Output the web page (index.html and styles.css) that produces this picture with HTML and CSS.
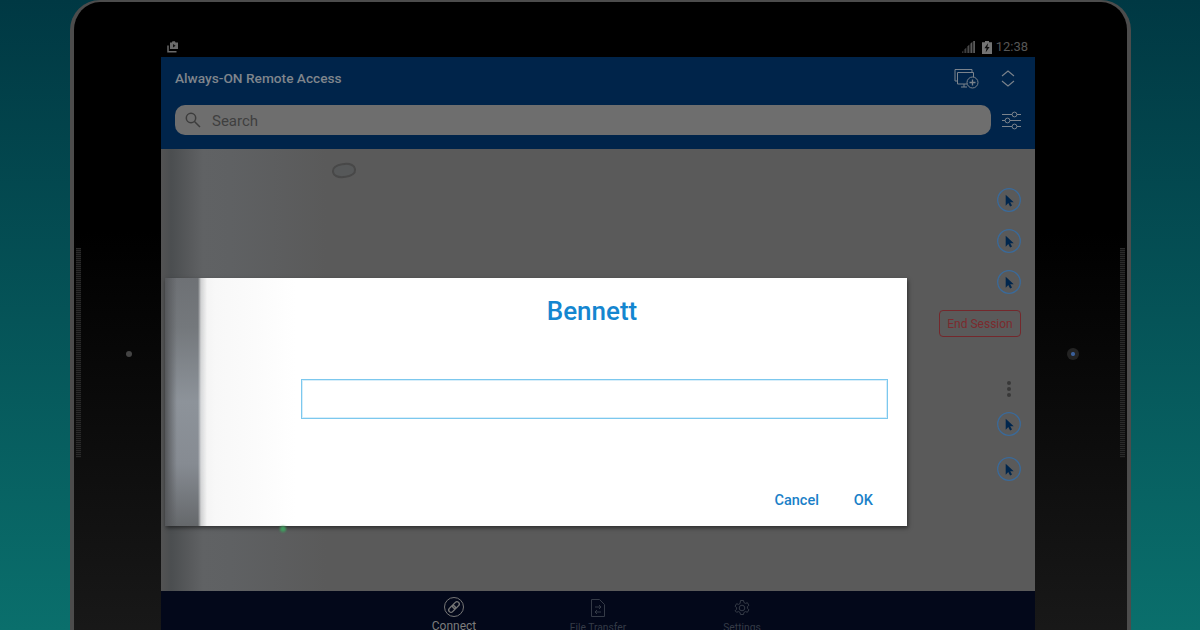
FILE: index.html
```html
<!DOCTYPE html>
<html lang="en">
<head>
  <meta charset="UTF-8" />
  <title>Always-ON Remote Access</title>
  <link rel="stylesheet" href="styles.css">
</head>
<body>
  <div class="tablet">
    <div class="grille grille-left"></div>
    <div class="grille grille-right"></div>
    <div class="sensor"></div>
    <div class="camera"></div>

    <div class="screen">
      <div class="status-bar">
        <svg class="status-app" width="12" height="12" viewBox="0 0 12 12">
          <path d="M3 1.500h1.800l.7-1.200h2.400l.7 1.200H11v6.500H3z" fill="#6a6a6a"/>
          <path d="M6 3l2.600 1.700L6 6.400z" fill="#111"/>
          <path d="M1 4.500v6.300h8.500" fill="none" stroke="#6a6a6a" stroke-width="1.500"/>
        </svg>
        <div class="status-right">
          <svg width="13" height="12" viewBox="0 0 13 12">
            <path d="M0 12V10.700L1.400 9.400V12z" fill="#333"/>
            <path d="M2.400 12V8.400L4.400 6.500V12z" fill="#3e3e3e"/>
            <path d="M5.400 12V5.500L7.400 3.600V12z" fill="#4a4a4a"/>
            <path d="M8.400 12V2.700L10.400 .8V12z" fill="#5a5a5a"/>
            <path d="M11.200 12V0H13V12z" fill="#5a5a5a"/>
          </svg>
          <svg class="battery" width="10" height="13" viewBox="0 0 10 13">
            <path d="M3 0h4v1.200h3V13H0V1.200h3z" fill="#747474"/>
            <path d="M6.200 2L2.400 7.200h2.200L3.600 11.600l4-5.600H5.300z" fill="#0c0c0c"/>
          </svg>
          <span class="clock">12:38</span>
        </div>
      </div>

      <div class="app">
        <header class="app-header">
          <div class="title-row">
            <span class="app-title">Always-ON Remote Access</span>
            <svg class="add-screen" width="25" height="20" viewBox="0 0 25 20" fill="none" stroke="#7b838c" stroke-width="1">
              <path d="M3 12H1V.5h17V3"/>
              <path d="M3.500 3.500H19.500v4.500M13 15H3.500V3.500"/>
              <path d="M7 18h6M10 15v3"/>
              <circle cx="18.500" cy="13.500" r="5.500"/>
              <path d="M18.500 10.500v6M15.500 13.500h6" stroke-width="1.300"/>
            </svg>
            <svg class="sort" width="14" height="17" viewBox="0 0 14 17" fill="none" stroke="#7b838c" stroke-width="1.100">
              <path d="M1 6l6-5 6 5M1 11l6 5 6-5"/>
            </svg>
          </div>
          <div class="search-row">
            <div class="search-box">
              <svg width="16" height="16" viewBox="0 0 16 16" fill="none" stroke="#3c3c3c" stroke-width="1.500">
                <circle cx="6" cy="6" r="4.700"/>
                <path d="M9.500 9.500l5.500 5.500"/>
              </svg>
              <span class="search-label">Search</span>
            </div>
            <svg class="filters" width="19" height="19" viewBox="0 0 19 19" fill="none" stroke="#7b838c" stroke-width="1">
              <path d="M0 3.500h10M15 3.500h4M0 9.500h3M8 9.500h11M0 15.500h10M15 15.500h4"/>
              <circle cx="12.500" cy="3.500" r="2.400"/>
              <circle cx="5.500" cy="9.500" r="2.400"/>
              <circle cx="12.500" cy="15.500" r="2.400"/>
            </svg>
          </div>
        </header>

        <main class="session-list">
          <div class="blur-band"></div>
          <div class="smudge"></div>
          <div class="row"><svg class="cursor" width="24" height="24" viewBox="0 0 24 24"><circle cx="12" cy="12" r="11.300"/><path d="M8.700 6.700v11l2.600-2.600 1.800 3.400 1.900-1-1.800-3.300h3.500z"/></svg></div>
          <div class="row"><svg class="cursor" width="24" height="24" viewBox="0 0 24 24"><circle cx="12" cy="12" r="11.300"/><path d="M8.700 6.700v11l2.600-2.600 1.800 3.400 1.900-1-1.800-3.300h3.500z"/></svg></div>
          <div class="row"><svg class="cursor" width="24" height="24" viewBox="0 0 24 24"><circle cx="12" cy="12" r="11.300"/><path d="M8.700 6.700v11l2.600-2.600 1.800 3.400 1.900-1-1.800-3.300h3.500z"/></svg></div>
          <div class="row"><button class="end-session">End Session</button></div>
          <div class="row row-menu"><div class="dots"><i></i><i></i><i></i></div></div>
          <div class="row row-short"><svg class="cursor" width="24" height="24" viewBox="0 0 24 24"><circle cx="12" cy="12" r="11.300"/><path d="M8.700 6.700v11l2.600-2.600 1.800 3.400 1.900-1-1.800-3.300h3.500z"/></svg></div>
          <div class="row row-last"><svg class="cursor" width="24" height="24" viewBox="0 0 24 24"><circle cx="12" cy="12" r="11.300"/><path d="M8.700 6.700v11l2.600-2.600 1.800 3.400 1.900-1-1.800-3.300h3.500z"/></svg></div>
        </main>

        <nav class="bottom-nav">
          <div class="tab tab-active">
            <svg width="20" height="20" viewBox="0 0 20 20" fill="none" stroke="#777" stroke-width="1">
              <circle cx="10" cy="10" r="9.500"/>
              <g transform="rotate(-45 10 10)" stroke-width="1.300">
                <rect x="3.500" y="7.700" width="7.500" height="4.600" rx="2.300"/>
                <rect x="9" y="7.700" width="7.500" height="4.600" rx="2.300"/>
              </g>
            </svg>
            <span>Connect</span>
          </div>
          <div class="tab">
            <svg width="14" height="18" viewBox="0 0 14 18" fill="none" stroke="#353b47" stroke-width="1">
              <path d="M.5.500h8l5 5v12H.5z"/>
              <path d="M4 8h6M8 6l2 2-2 2M10 13H4M6 11l-2 2 2 2"/>
            </svg>
            <span>File Transfer</span>
          </div>
          <div class="tab">
            <svg class="gear" width="16" height="16" viewBox="0 0 16 16" fill="none" stroke="#353b47" stroke-width="1">
              <path d="M6.500.500h3l.4 2 1.600.9 1.900-.7 1.500 2.600-1.500 1.300v1.800l1.500 1.300-1.500 2.600-1.900-.7-1.600.9-.4 2h-3l-.4-2-1.600-.9-1.900.7L1.100 10.700l1.500-1.300V7.600L1.100 6.300l1.500-2.600 1.900.7 1.600-.9z"/>
              <circle cx="8" cy="8" r="2.800"/>
            </svg>
            <span>Settings</span>
          </div>
        </nav>
      </div>

      <div class="dialog">
        <h1 class="dialog-title">Bennett</h1>
        <input class="dialog-input" type="text">
        <div class="dialog-actions">
          <span>Cancel</span>
          <span>OK</span>
        </div>
        <div class="speck"></div>
      </div>
    </div>
  </div>
</body>
</html>
```

FILE: styles.css
```css
html, body {
  margin: 0;
  height: 630px;
  overflow: hidden;
}

body {
  font-family: 'Roboto', 'Liberation Sans', sans-serif;
  background: linear-gradient(180deg, #003843 0%, #0a6f6c 100%);
  padding-left: 70px;
}

.tablet {
  position: relative;
  width: 1061px;
  height: 660px;
  box-sizing: border-box;
  padding-left: 87px;
  background: linear-gradient(180deg, #000 0%, #000 35%, #1a1a1a 100%);
  border: 4px solid #4c4c4c;
  border-top-width: 2px;
  border-bottom: none;
  border-radius: 30px 30px 0 0;
}

.grille {
  position: absolute;
  top: 246px;
  width: 5px;
  height: 210px;
  background: repeating-linear-gradient(180deg, #2a2a2a 0, #2a2a2a 1px, #121212 1px, #121212 2px);
}
.grille-left { left: 2px; }
.grille-right { right: 2px; }

.sensor {
  position: absolute;
  left: 52px;
  top: 349px;
  width: 6px;
  height: 6px;
  border-radius: 50%;
  background: #444;
}

.camera {
  position: absolute;
  left: 993px;
  top: 346px;
  width: 12px;
  height: 12px;
  border-radius: 50%;
  background: radial-gradient(circle, #3a5f9a 0, #3a5f9a 1.5px, #232323 2.5px);
}

.screen {
  position: relative;
  width: 874px;
}

.status-bar {
  height: 55px;
  box-sizing: border-box;
  padding: 39px 7px 0 6px;
  display: flex;
  justify-content: space-between;
  align-items: flex-start;
}

.status-right {
  display: flex;
  align-items: center;
  gap: 7px;
  color: #565656;
  margin-top: -1px;
}

.battery { margin-right: -3px; }

.clock { font-size: 13px; line-height: 14px; }

.app {
  display: flex;
  flex-direction: column;
  height: 573px;
}

.app-header {
  height: 92px;
  box-sizing: border-box;
  background: #00244a;
  padding: 0 14px;
}

.title-row {
  height: 42px;
  margin-bottom: 6px;
  display: flex;
  align-items: center;
}

.app-title {
  flex: 1;
  font-size: 13.700px;
  font-weight: 500;
  color: #7f858c;
}

.add-screen { margin-right: 22px; margin-top: 1px; }
.sort { margin-right: 6px; }

.search-row {
  display: flex;
  align-items: center;
  gap: 11px;
}

.search-box {
  flex: 1;
  height: 30px;
  box-sizing: border-box;
  border-radius: 10px;
  background: #6e6e6e;
  display: flex;
  align-items: center;
  gap: 11px;
  padding-left: 10px;
  font-size: 15px;
  color: #3f3f3f;
}

.search-label { margin-top: 2px; }

.session-list {
  position: relative;
  flex: 1;
  overflow: hidden;
  box-sizing: border-box;
  padding: 31px 14px 0 0;
  background: #5a5a5a;
}

.smudge {
  position: absolute;
  left: 171px;
  top: 14px;
  width: 24px;
  height: 15px;
  box-sizing: border-box;
  border: 2px solid #484848;
  border-radius: 45%;
  background: #565859;
  transform: rotate(-6deg);
}

.blur-band {
  position: absolute;
  left: 0;
  top: 0;
  width: 165px;
  height: 100%;
  background: linear-gradient(90deg, #535353 0, #4b4e50 10px, #57595b 28px, #606264 42px, #5f6163 70px, #5a5a5a 100%);
}

.row {
  position: relative;
  height: 41px;
  display: flex;
  align-items: center;
  justify-content: flex-end;
}

.row-menu {
  margin-top: 24px;
  height: 42px;
}

.row-short { height: 29px; }
.row-last { height: 61px; }

.cursor {
  margin-bottom: 1px;
}
.cursor circle {
  fill: none;
  stroke: #3a6a9a;
  stroke-width: 1.300;
}
.cursor path {
  fill: #00264d;
}

.end-session {
  width: 82px;
  height: 27px;
  padding: 0;
  font: 400 12px 'Roboto', sans-serif;
  color: #7c2a2e;
  background: transparent;
  border: 1px solid #74282c;
  border-radius: 4px;
}

.dots {
  display: flex;
  flex-direction: column;
  gap: 2px;
  margin-right: 10px;
}
.dots i {
  width: 4px;
  height: 4px;
  border-radius: 50%;
  background: #383838;
}

.bottom-nav {
  height: 39px;
  flex: none;
  overflow: hidden;
  background: #03081a;
  padding: 0 229px;
  display: flex;
  justify-content: space-between;
}

.tab {
  width: 128px;
  box-sizing: border-box;
  display: flex;
  flex-direction: column;
  align-items: center;
  gap: 4px;
  padding-top: 8px;
  font-size: 10.300px;
  color: #353b47;
  line-height: 13px;
  white-space: nowrap;
}

.tab svg, .tab span { flex: none; }

.gear { margin: 1px 0; }

.tab-active {
  padding-top: 6px;
  gap: 3px;
  font-size: 12px;
  color: #7c7c7c;
}

.dialog {
  position: absolute;
  left: 4px;
  top: 276px;
  width: 742px;
  height: 248px;
  box-sizing: border-box;
  padding: 0 19px 0 136px;
  background: linear-gradient(90deg, #eeeeee 0, #f2f2f2 36px, #f8f8f8 50px, #fbfbfb 90px, #fff 130px);
  box-shadow: 1px 2px 4px rgba(0, 0, 0, 0.5);
  display: flex;
  flex-direction: column;
}

/* washed out strip on the left of the capture */
.dialog::before {
  content: "";
  position: absolute;
  left: 0;
  top: 0;
  width: 42px;
  height: 100%;
  background:
    linear-gradient(90deg, #55575a 0, rgba(85, 87, 90, 0) 12px),
    linear-gradient(180deg, #6e7175 0, #74787c 20%, #8d939a 50%, #868b92 75%, #65686b 100%);
  -webkit-mask-image: linear-gradient(90deg, #000 33px, rgba(0, 0, 0, 0.25) 36px, transparent 42px);
  mask-image: linear-gradient(90deg, #000 33px, rgba(0, 0, 0, 0.25) 36px, transparent 42px);
}

.speck {
  position: absolute;
  left: 115px;
  bottom: -6px;
  width: 6px;
  height: 6px;
  border-radius: 50%;
  background: #3f9f5f;
  filter: blur(1px);
}

.dialog-title {
  position: relative;
  margin: 16px 5px 0 0;
  font-size: 26px;
  line-height: 34px;
  font-weight: 500;
  text-align: center;
  color: #1486d0;
}

.dialog-input {
  position: relative;
  display: block;
  width: 100%;
  height: 40px;
  box-sizing: border-box;
  margin-top: 51px;
  border: 1px solid #7cc8ee;
  box-shadow: inset 0 0 0 1px rgba(124, 200, 238, 0.3);
  border-radius: 0;
  background: #fff;
  outline: none;
}

.dialog-actions {
  margin-top: 72px;
  display: flex;
  justify-content: flex-end;
  gap: 35px;
  padding-right: 15px;
  font-size: 14.500px;
  font-weight: 500;
  line-height: 20px;
  color: #1a7fc8;
}
```
